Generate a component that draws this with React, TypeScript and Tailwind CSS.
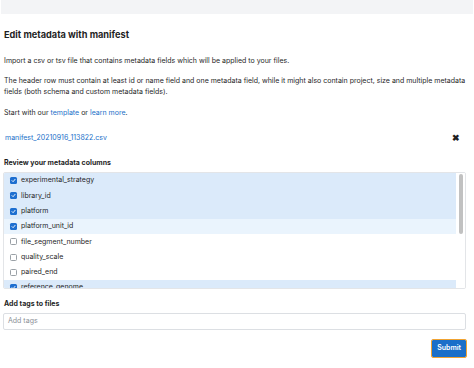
import { useState } from 'react'

const columns = [
  { name: 'experimental_strategy', checked: true },
  { name: 'library_id', checked: true },
  { name: 'platform', checked: true },
  { name: 'platform_unit_id', checked: true, hover: true },
  { name: 'file_segment_number', checked: false },
  { name: 'quality_scale', checked: false },
  { name: 'paired_end', checked: false },
  { name: 'reference_genome', checked: true },
]

function Check({ on }: { on: boolean }) {
  if (!on) return <span className="w-[7px] h-[7px] rounded-[1.5px] border border-[#9aa0a6] bg-white shrink-0" />
  return (
    <span className="w-[7px] h-[7px] rounded-[1.5px] bg-[#1e6fd0] shrink-0 flex items-center justify-center">
      <svg width="5" height="5" viewBox="0 0 10 10">
        <path d="M2 5.2 L4.2 7.4 L8.2 2.6" stroke="white" strokeWidth="1.8" fill="none" strokeLinecap="round" strokeLinejoin="round" />
      </svg>
    </span>
  )
}

export default function App() {
  const [cols] = useState(columns)
  return (
    <div className="w-[474px] h-[368px] bg-white text-[#1f1f1f] overflow-hidden" style={{ fontFamily: 'Inter, "Noto Sans", sans-serif' }}>
      <div className="mx-[1px] h-[14px] bg-[#f3f4f6]" />
      <div className="pl-[4px] pr-[8px]">
        <h1 className="mt-[15px] text-[9.2px] leading-[12px] font-bold">Edit metadata with manifest</h1>
        <p className="mt-[14px] text-[7px] leading-[11px]">Import a csv or tsv file that contains metadata fields which will be applied to your files.</p>
        <p className="mt-[9px] text-[7px] leading-[11px]">
          The header row must contain at least id or name field and one metadata field, while it might also contain project, size and multiple metadata fields (both schema and custom metadata fields).
        </p>
        <p className="mt-[10px] text-[7px] leading-[11px]">
          Start with our <span className="text-[#1a6fc9]">template</span> or <span className="text-[#1a6fc9]">learn more</span>.
        </p>
        <div className="mt-[14px] flex items-center justify-between pl-[1px]">
          <span className="text-[7px] leading-[11px] text-[#1a6fc9]">manifest_20210916_113822.csv</span>
          <span className="mr-[6px] text-[9px] leading-[11px] font-bold">✖</span>
        </div>
        <h2 className="mt-[14px] text-[7px] leading-[11px] font-bold">Review your metadata columns</h2>
        <div className="mt-[4px] ml-[-1px] h-[117px] border border-[#e3e5e8] rounded-[2px] flex overflow-hidden">
          <div className="flex-1 overflow-hidden">
            {cols.map(c => (
              <div
                key={c.name}
                className={`h-[15.3px] flex items-center gap-[4px] pl-[6px] text-[7px] ${c.hover ? 'bg-[#eaf4fd]' : c.checked ? 'bg-[#dbeafa]' : 'bg-white'}`}
              >
                <Check on={c.checked} />
                <span>{c.name}</span>
              </div>
            ))}
          </div>
          <div className="w-[9px] bg-white flex justify-center pt-[1px]">
            <div className="w-[4px] h-[60px] rounded-[2px] bg-[#c1c1c1]" />
          </div>
        </div>
        <h2 className="mt-[9px] text-[7px] leading-[11px] font-bold">Add tags to files</h2>
        <div className="mt-[4px] ml-[-1px] h-[17px] border border-[#dcdfe3] rounded-[2px] flex items-center pl-[4px]">
          <span className="text-[7px] text-[#8a8f96]">Add tags</span>
        </div>
        <div className="mt-[10px] flex justify-end">
          <button className="h-[17px] px-[5px] bg-[#1a6fc9] text-white text-[7px] font-semibold rounded-[1px] outline outline-[1.5px] outline-[#f0a332]">Submit</button>
        </div>
      </div>
    </div>
  )
}
